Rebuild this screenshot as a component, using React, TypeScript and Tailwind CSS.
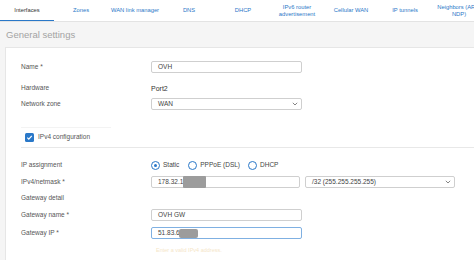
import React from "react";

const tabs = [
  { l: "Interfaces", active: true },
  { l: "Zones" },
  { l: "WAN link manager" },
  { l: "DNS" },
  { l: "DHCP" },
  { l: "IPv6 router advertisement", two: true },
  { l: "Cellular WAN" },
  { l: "IP tunnels" },
  { l: "Neighbors (ARP/ NDP)", two: true },
];

function Chevron() {
  return (
    <svg width="6" height="4" viewBox="0 0 6 4" className="shrink-0">
      <path d="M0.8 0.8 L3 3 L5.2 0.8" fill="none" stroke="#777" strokeWidth="0.9" />
    </svg>
  );
}

function Radio({ on }: { on?: boolean }) {
  return (
    <span className="w-[9px] h-[9px] rounded-full border-[1.5px] border-[#2a78c8] flex items-center justify-center shrink-0">
      {on && <span className="w-[3px] h-[3px] rounded-full bg-[#2a78c8]" />}
    </span>
  );
}

function Row({ label, children, h = "h-[12px]" }: { label: string; children?: React.ReactNode; h?: string }) {
  return (
    <div className={`flex items-center ${h}`}>
      <div className="w-[130px] shrink-0 text-[#555]">{label}</div>
      {children}
    </div>
  );
}

export default function App() {
  return (
    <div
      className="w-[474px] h-[260px] overflow-hidden bg-white text-[6.5px] leading-none"
      style={{ fontFamily: '"Liberation Sans", Arial, sans-serif' }}
    >
      {/* tabs */}
      <div className="flex h-[22px] border-b border-[#e3e3e3] whitespace-nowrap">
        {tabs.map((t) => (
          <div
            key={t.l}
            className={`w-[54px] shrink-0 flex items-center justify-center text-center text-[5.8px] leading-[7px] ${
              t.active ? "text-[#333] border-b-[1.5px] border-[#2a78c8]" : "text-[#2a78c8]"
            }`}
          >
            {t.two ? (
              <span className="whitespace-normal w-[46px]">{t.l}</span>
            ) : (
              t.l
            )}
          </div>
        ))}
      </div>
      {/* gray header */}
      <div className="bg-[#f5f5f5] pl-[5px]">
        <div className="h-[25px] flex items-center pl-[1px] text-[9.5px] text-[#a3a3a3]">General settings</div>
        <div className="bg-white border-l border-t border-[#e6e6e6] h-[220px] pl-[15px] pt-[13px]">
          <Row label="Name *" h="h-[12px]">
            <div className="w-[151px] h-[12px] border border-[#cfcfcf] rounded-[2px] flex items-center pl-[6px] text-[#444]">OVH</div>
          </Row>
          <div className="h-[9px]" />
          <Row label="Hardware">
            <span className="text-[#333] text-[7px]">Port2</span>
          </Row>
          <div className="h-[4px]" />
          <Row label="Network zone">
            <div className="w-[151px] h-[12px] border border-[#cfcfcf] rounded-[2px] flex items-center justify-between pl-[6px] pr-[3px] text-[#444]">
              WAN
              <Chevron />
            </div>
          </Row>
          <div className="h-[17px]" />
          <div className="w-[90px] border-t border-[#f3f3f3]" />
          <div className="h-[20px] flex items-center border-b border-[#e8e8e8] pl-[4px]">
            <span className="w-[9px] h-[9px] bg-[#2a78c8] rounded-[1.5px] flex items-center justify-center">
              <svg width="7" height="7" viewBox="0 0 8 8">
                <path d="M1.5 4.2 L3.2 5.8 L6.6 2.2" fill="none" stroke="white" strokeWidth="1.4" />
              </svg>
            </span>
            <span className="ml-[4px] text-[#555]">IPv4 configuration</span>
          </div>
          <div className="h-[11px]" />
          <Row label="IP assignment">
            <div className="flex items-center">
              <Radio on />
              <span className="ml-[3px] text-[#444]">Static</span>
              <span className="ml-[9px]" />
              <Radio />
              <span className="ml-[3px] text-[#444]">PPPoE (DSL)</span>
              <span className="ml-[8px]" />
              <Radio />
              <span className="ml-[3px] text-[#444]">DHCP</span>
            </div>
          </Row>
          <div className="h-[5px]" />
          <Row label="IPv4/netmask *">
            <div className="w-[149px] h-[12px] border border-[#cfcfcf] rounded-[2px] flex items-center pl-[6px] text-[#444] relative">
              178.32.1
              <span className="absolute left-[31px] top-[-1px] w-[23px] h-[12px] bg-[#9c9c9c] rounded-[1px]" />
            </div>
            <div className="ml-[5px] w-[150px] h-[12px] border border-[#cfcfcf] rounded-[2px] flex items-center justify-between pl-[6px] pr-[3px] text-[#444]">
              /32 (255.255.255.255)
              <Chevron />
            </div>
          </Row>
          <div className="h-[5px]" />
          <Row label="Gateway detail" h="h-[11px]" />
          <div className="h-[5px]" />
          <Row label="Gateway name *">
            <div className="w-[151px] h-[12px] border border-[#cfcfcf] rounded-[2px] flex items-center pl-[6px] text-[#444]">OVH GW</div>
          </Row>
          <div className="h-[6px]" />
          <Row label="Gateway IP *">
            <div className="w-[151px] h-[12px] border border-[#7fb0e2] rounded-[2px] flex items-center pl-[6px] text-[#444] relative">
              51.83.6
              <span className="absolute left-[27px] top-[1px] w-[19px] h-[9px] bg-[#9c9c9c] rounded-[2px]" />
            </div>
          </Row>
          <div className="h-[9px]" />
          <div className="pl-[135px] text-[5.5px] text-[#f5e6c8]">Enter a valid IPv4 address.</div>
        </div>
      </div>
    </div>
  );
}
